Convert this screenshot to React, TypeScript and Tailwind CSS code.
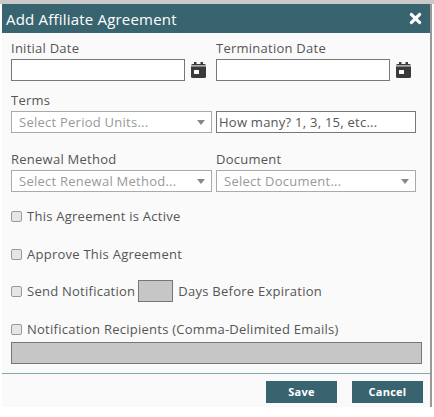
import { FaTimes } from "react-icons/fa";

function Cal() {
  return (
    <svg width="15" height="16" viewBox="0 0 15 16" className="shrink-0 text-[#3a3a3a]">
      <rect x="0" y="2" width="15" height="14" rx="1.5" fill="currentColor" />
      <rect x="3" y="0" width="2.5" height="4" fill="currentColor" />
      <rect x="9.5" y="0" width="2.5" height="4" fill="currentColor" />
      <rect x="0" y="3.4" width="15" height="1" fill="#fafafa" />
      <rect x="3" y="8" width="5" height="4" fill="#fafafa" />
    </svg>
  );
}

function Select({ text }: { text: string }) {
  return (
    <div className="flex h-[22px] items-center justify-between border border-[#aaaaaa] bg-white pl-[7px] pr-[6px] text-[#999999]">
      <span>{text}</span>
      <span className="h-0 w-0 border-x-[4px] border-t-[5px] border-x-transparent border-t-[#888888]" />
    </div>
  );
}

function Check({ label }: { label: string }) {
  return (
    <span className="flex items-center gap-[5px]">
      <span className="h-[11px] w-[11px] rounded-[2px] border border-[#999999] bg-[#e6e6e6]" />
      <span>{label}</span>
    </span>
  );
}

export default function App() {
  return (
    <div className="h-[417px] w-[434px] bg-white font-['Open_Sans',sans-serif] text-[13px] leading-[18px] tracking-[0.25px] text-[#555555]">
      <div className="h-[4px] bg-[#c9c9c9]" />
      <div className="flex h-[403px] w-[432px] flex-col bg-white pl-[2px]">
        <div className="flex h-full flex-col border-r-2 border-[#999999] bg-[#fafafa]">
          <div className="flex h-[29px] shrink-0 items-center justify-between bg-[#38646f] pl-[4px] pr-[8px] text-[15px] tracking-[0.2px] text-white">
            <span>Add Affiliate Agreement</span>
            <FaTimes className="h-[17px] w-[13px]" />
          </div>
          <div className="flex flex-1 flex-col pl-[9px] pr-[7px] pt-[6px]">
            <div className="grid grid-cols-[205px_1fr]">
              <div>
                <div>Initial Date</div>
                <div className="mt-[2px] flex items-center gap-[6px]">
                  <div className="h-[22px] w-[174px] border border-[#777777] bg-white" />
                  <Cal />
                </div>
              </div>
              <div>
                <div>Termination Date</div>
                <div className="mt-[2px] flex items-center gap-[6px]">
                  <div className="h-[22px] w-[174px] border border-[#777777] bg-white" />
                  <Cal />
                </div>
              </div>
            </div>
            <div className="mt-[10px]">Terms</div>
            <div className="mt-[2px] grid grid-cols-[205px_1fr]">
              <div className="w-[201px]"><Select text="Select Period Units..." /></div>
              <div className="flex h-[22px] w-[200px] items-center border border-[#777777] bg-white pl-[2px]">How many? 1, 3, 15, etc...</div>
            </div>
            <div className="mt-[17px] grid grid-cols-[205px_1fr]">
              <div>
                <div>Renewal Method</div>
                <div className="mt-[2px] w-[201px]"><Select text="Select Renewal Method..." /></div>
              </div>
              <div>
                <div>Document</div>
                <div className="mt-[2px] w-[200px]"><Select text="Select Document..." /></div>
              </div>
            </div>
            <div className="mt-[15px]"><Check label="This Agreement is Active" /></div>
            <div className="mt-[20px]"><Check label="Approve This Agreement" /></div>
            <div className="mt-[17px] flex items-center">
              <Check label="Send Notification" />
              <div className="ml-[3px] h-[22px] w-[35px] border border-[#777777] bg-[#c6c6c6]" />
              <span className="ml-[5px]">Days Before Expiration</span>
            </div>
            <div className="mt-[18px]"><Check label="Notification Recipients (Comma-Delimited Emails)" /></div>
            <div className="mt-[4px] h-[22px] w-[411px] border border-[#777777] bg-[#c6c6c6]" />
          </div>
          <div className="flex h-[34px] shrink-0 items-start justify-end gap-[15px] border-t border-[#7fa9b0] pr-[7px] pt-[7px]">
            <button className="h-[22px] w-[71px] bg-[#38646f] text-[11px] font-bold text-white">Save</button>
            <button className="h-[22px] w-[71px] bg-[#38646f] text-[11px] font-bold text-white">Cancel</button>
          </div>
        </div>
      </div>
    </div>
  );
}
